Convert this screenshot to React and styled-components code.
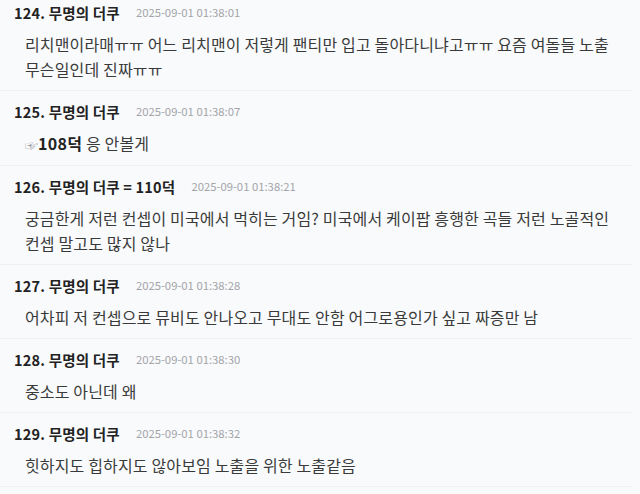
import React from "react";
import styled, { createGlobalStyle } from "styled-components";

const GlobalStyle = createGlobalStyle`
  html, body {
    margin: 0;
    padding: 0;
    background: #f9fafc;
    font-family: "Noto Sans CJK KR", "Noto Sans", sans-serif;
    overflow: hidden;
  }
`;

const comments = [
  {
    no: 124,
    nick: "무명의 더쿠",
    date: "2025-09-01 01:38:01",
    body: "리치맨이라매ㅠㅠ 어느 리치맨이 저렇게 팬티만 입고 돌아다니냐고ㅠㅠ 요즘 여돌들 노출 무슨일인데 진짜ㅠㅠ",
  },
  {
    no: 125,
    nick: "무명의 더쿠",
    date: "2025-09-01 01:38:07",
    anchor: "108덕",
    body: " 응 안볼게",
  },
  {
    no: 126,
    nick: "무명의 더쿠 = 110덕",
    date: "2025-09-01 01:38:21",
    body: "궁금한게 저런 컨셉이 미국에서 먹히는 거임? 미국에서 케이팝 흥행한 곡들 저런 노골적인 컨셉 말고도 많지 않나",
  },
  {
    no: 127,
    nick: "무명의 더쿠",
    date: "2025-09-01 01:38:28",
    body: "어차피 저 컨셉으로 뮤비도 안나오고 무대도 안함 어그로용인가 싶고 짜증만 남",
  },
  {
    no: 128,
    nick: "무명의 더쿠",
    date: "2025-09-01 01:38:30",
    body: "중소도 아닌데 왜",
  },
  {
    no: 129,
    nick: "무명의 더쿠",
    date: "2025-09-01 01:38:32",
    body: "힛하지도 힙하지도 않아보임 노출을 위한 노출같음",
  },
];

const App = () => {
  return (
    <React.Fragment>
      <GlobalStyle />
      <List>
        {comments.map((c) => (
          <Item key={c.no}>
            <Head>
              <Nick>
                {c.no}. {c.nick}
              </Nick>
              <Date>{c.date}</Date>
            </Head>
            <Body>
              {c.anchor && (
                <>
                  <Pointer>☞</Pointer>
                  <Anchor>{c.anchor}</Anchor>
                </>
              )}
              {c.body}
            </Body>
          </Item>
        ))}
      </List>
    </React.Fragment>
  );
};

const List = styled.div`
  width: 632px;
  margin-top: -8px;
`;

const Item = styled.div`
  padding: 10px 0 8px 14px;
  border-bottom: 1px solid #f0f1f4;
`;

const Head = styled.div`
  display: flex;
  align-items: center;
  gap: 16px;
  height: 20px;
`;

const Nick = styled.span`
  font-size: 14.5px;
  font-weight: 700;
  letter-spacing: 0.2px;
  color: #222;
`;

const Date = styled.span`
  font-size: 11.3px;
  color: #a2a4a8;
`;

const Body = styled.div`
  margin-top: 10px;
  padding-left: 11px;
  padding-right: 18px;
  font-size: 16px;
  letter-spacing: 0.15px;
  line-height: 25px;
  word-break: keep-all;
  color: #3a3a3a;
`;

const Pointer = styled.span`
  font-size: 13px;
  letter-spacing: 0;
  color: #9a9ca0;
`;

const Anchor = styled.b`
  font-weight: 700;
  letter-spacing: 0.3px;
  color: #222;
`;

export default App;
